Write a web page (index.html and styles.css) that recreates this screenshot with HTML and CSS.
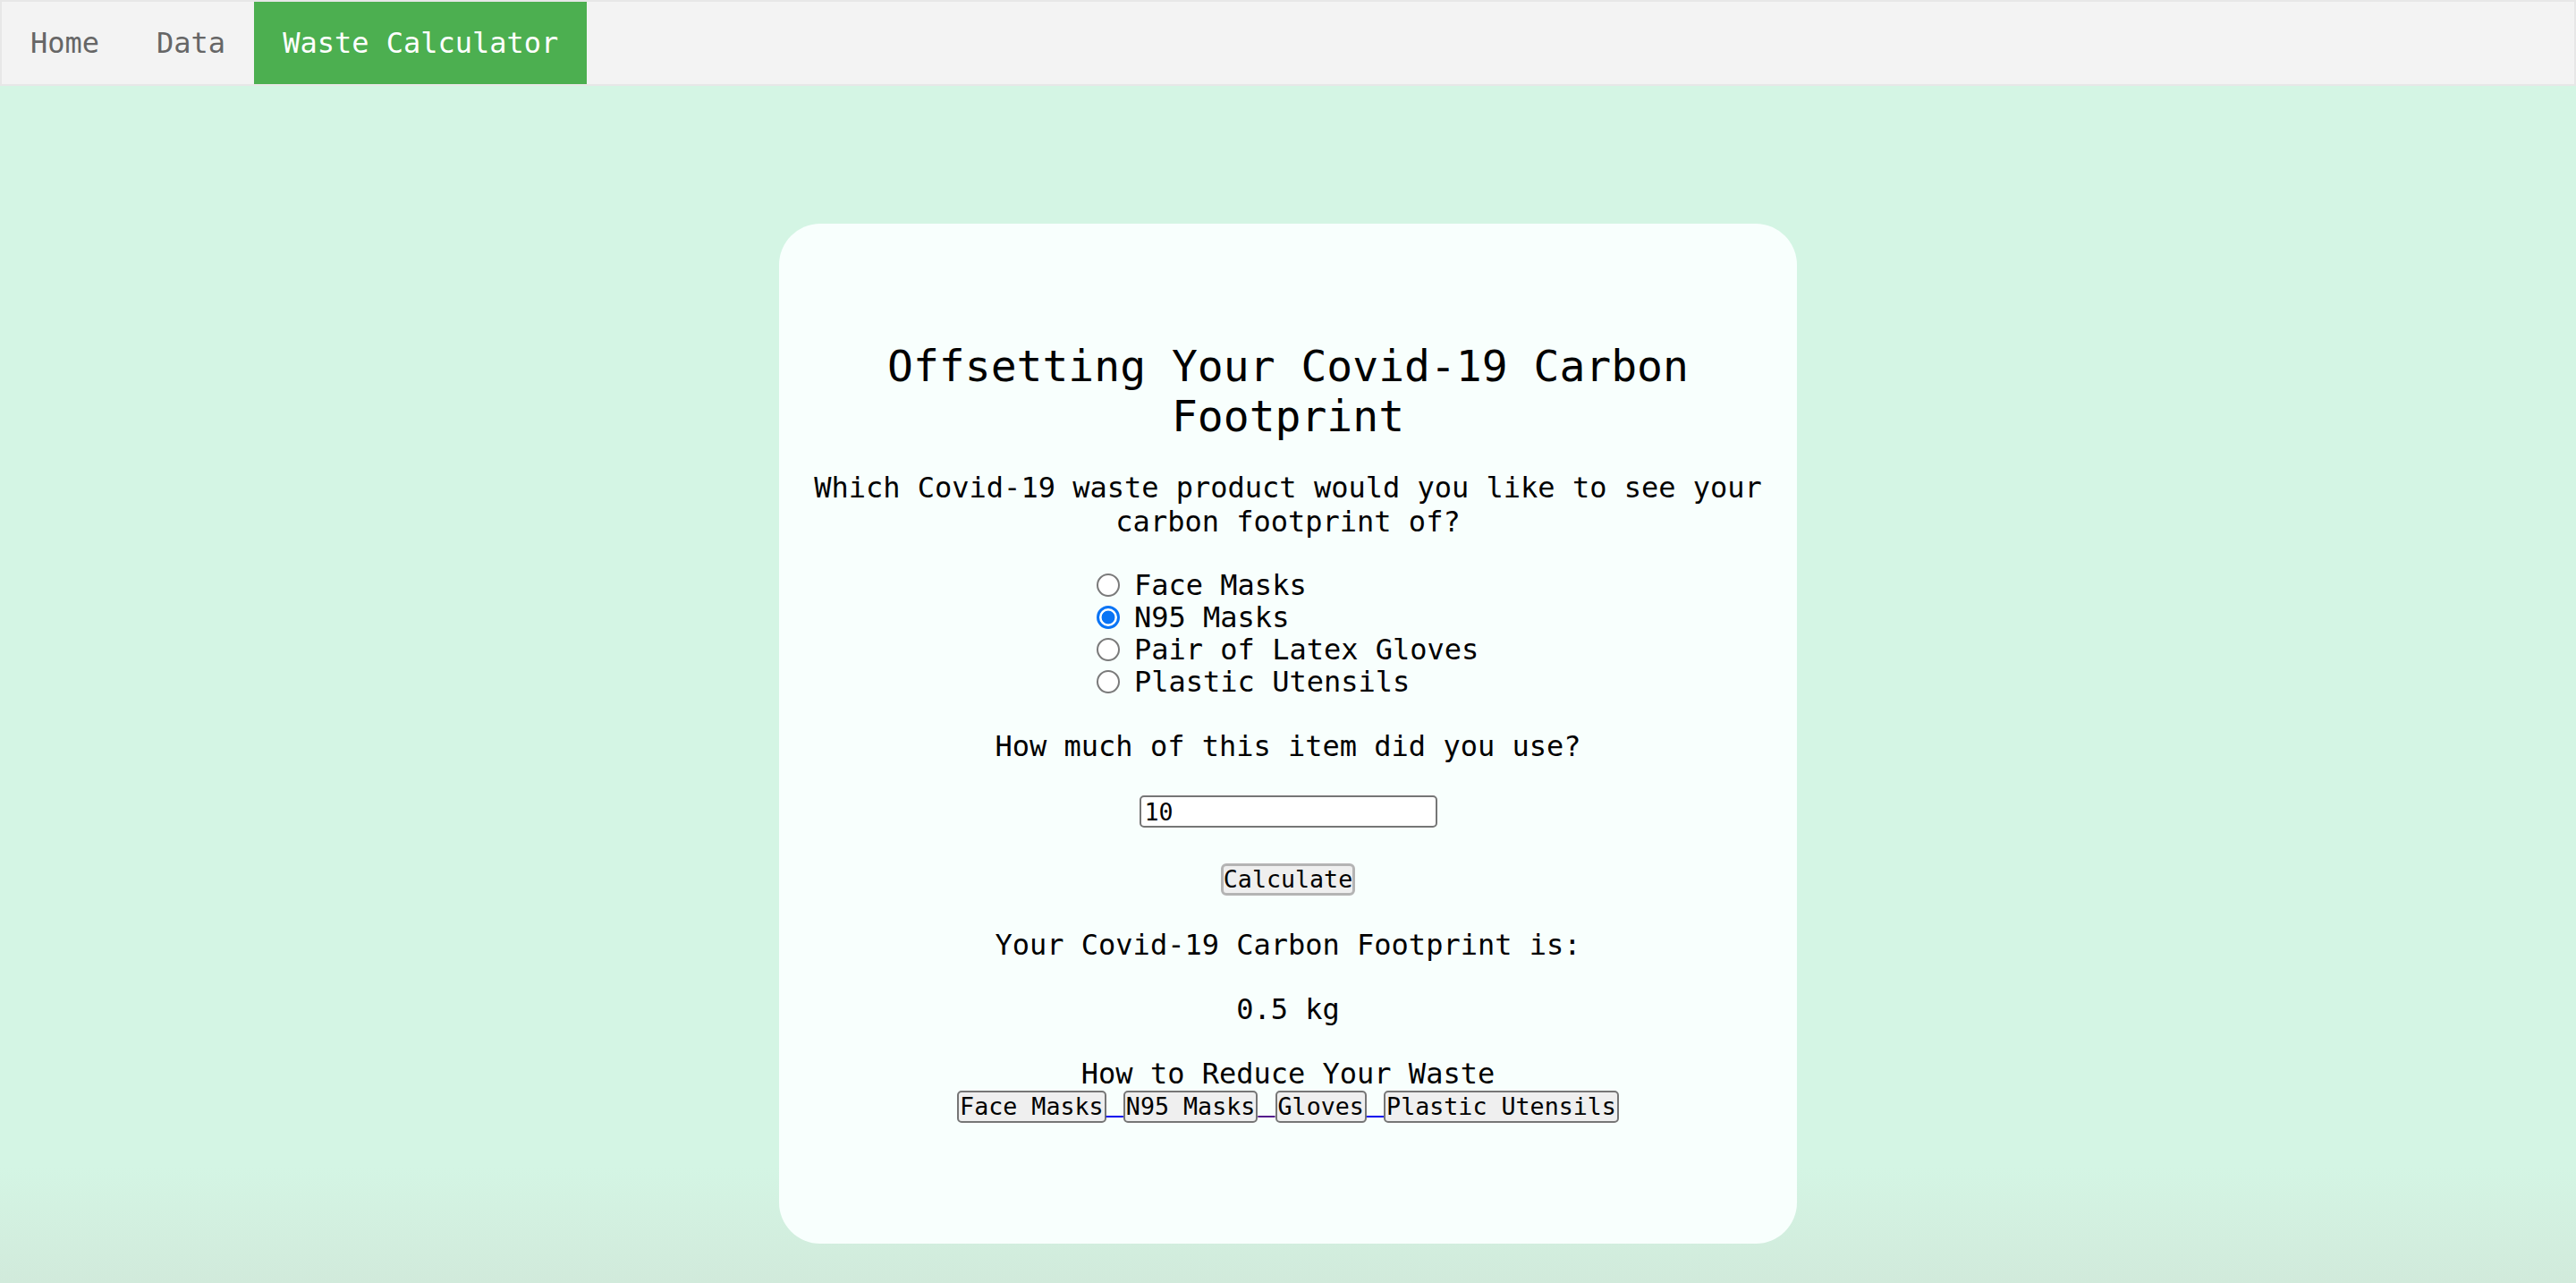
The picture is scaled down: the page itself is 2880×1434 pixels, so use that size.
FILE: index.html
```html
<!DOCTYPE html>
<html lang="en">
<head>
<meta charset="utf-8">
<title>Waste Calculator</title>
<link rel="stylesheet" href="styles.css">
</head>
<body>
<ul class="nav">
  <li><a href="#">Home</a></li>
  <li><a href="#">Data</a></li>
  <li><a class="active" href="#">Waste Calculator</a></li>
</ul>
<main class="card">
  <h1 class="title">Offsetting Your Covid-19 Carbon Footprint</h1>
  <p class="question">Which Covid-19 waste product would you like to see your carbon footprint of?</p>
  <div class="choices">
    <label class="choice"><input type="radio" name="item" class="radio"><span>Face Masks</span></label>
    <label class="choice"><input type="radio" name="item" class="radio" checked><span>N95 Masks</span></label>
    <label class="choice"><input type="radio" name="item" class="radio"><span>Pair of Latex Gloves</span></label>
    <label class="choice"><input type="radio" name="item" class="radio"><span>Plastic Utensils</span></label>
  </div>
  <p class="how-much">How much of this item did you use?</p>
  <input class="amount" type="text" value="10">
  <button class="calc" type="button">Calculate</button>
  <p class="result-label">Your Covid-19 Carbon Footprint is:</p>
  <p class="result">0.5 kg</p>
  <p class="reduce">How to Reduce Your Waste</p>
  <div class="tips"><a class="tip" href="#"><button class="tip-btn" type="button">Face Masks</button> </a><a class="tip visited" href="#"><button class="tip-btn" type="button">N95 Masks</button> </a><a class="tip" href="#"><button class="tip-btn" type="button">Gloves</button> </a><a class="tip" href="#"><button class="tip-btn" type="button">Plastic Utensils</button></a></div>
</main>
</body>
</html>
```

FILE: styles.css
```css
html {
  min-height: 100%;
  background: linear-gradient(to bottom, #d4f5e4 0%, #d4f5e4 91%, #d1eadb 100%);
}

body {
  margin: 0;
  min-height: 1434px;
  font-family: "DejaVu Sans Mono", monospace;
  color: #000;
}

.nav {
  list-style: none;
  margin: 0;
  padding: 0;
  display: flex;
  border: 2px solid #e7e7e7;
  background: #f3f3f3;
}

.nav a {
  display: block;
  padding: 28px 32px;
  font-size: 32px;
  line-height: 36px;
  color: #666;
  text-decoration: none;
}

.nav a.active {
  background: #4caf50;
  color: #fff;
}

.card {
  box-sizing: border-box;
  width: 1138px;
  height: 1140px;
  margin: 154px auto 0;
  padding: 131px 36px 0;
  background: #f8fffd;
  border-radius: 46px;
  text-align: center;
}

.title {
  margin: 0 0 33px;
  font-size: 48px;
  font-weight: normal;
  line-height: normal;
}

.question,
.how-much,
.result-label,
.result,
.reduce {
  margin: 0;
  font-size: 32px;
  line-height: normal;
}

.choices {
  width: 448px;
  margin: 34px auto 0;
  display: flex;
  flex-direction: column;
  text-align: left;
}

.choice {
  display: flex;
  align-items: center;
  height: 36px;
  font-size: 32px;
  line-height: 36px;
}

.radio {
  appearance: none;
  -webkit-appearance: none;
  box-sizing: border-box;
  width: 26px;
  height: 26px;
  margin: 0 16px 0 10px;
  border: 2px solid #7a7a7a;
  border-radius: 50%;
  background: #fff;
  flex: none;
}

.radio:checked {
  border: 3px solid #0a74f5;
  background: radial-gradient(circle, #0a74f5 0 7px, #fff 7.8px);
}

.how-much {
  margin-top: 35px;
}

.amount {
  display: block;
  box-sizing: border-box;
  width: 333px;
  height: 36px;
  margin: 36px auto 0;
  padding: 0 4px;
  border: 2px solid #767676;
  border-radius: 5px;
  background: #fff;
  font-family: "DejaVu Sans Mono", monospace;
  font-size: 26.67px;
  color: #000;
}

.calc {
  display: block;
  box-sizing: border-box;
  height: 36px;
  margin: 40px auto 0;
  padding: 0;
  border: 3px solid #b4b4b4;
  border-radius: 6px;
  background: #efefef;
  font-family: "DejaVu Sans Mono", monospace;
  font-size: 26.67px;
  line-height: 30px;
  color: #000;
}

.result-label {
  margin-top: 36px;
}

.result {
  margin-top: 34px;
}

.reduce {
  margin-top: 34px;
}

.tips {
  font-size: 32px;
  line-height: 32px;
}

.tip {
  color: #0000ee;
  text-decoration: underline;
  text-decoration-thickness: 2px;
}

.tip.visited {
  color: #551a8b;
}

.tip-btn {
  box-sizing: border-box;
  height: 36px;
  padding: 0 1px;
  border: 2px solid #767676;
  border-radius: 5px;
  background: #efefef;
  font-family: "DejaVu Sans Mono", monospace;
  font-size: 26.67px;
  line-height: 32px;
  color: #000;
  vertical-align: baseline;
}
```
